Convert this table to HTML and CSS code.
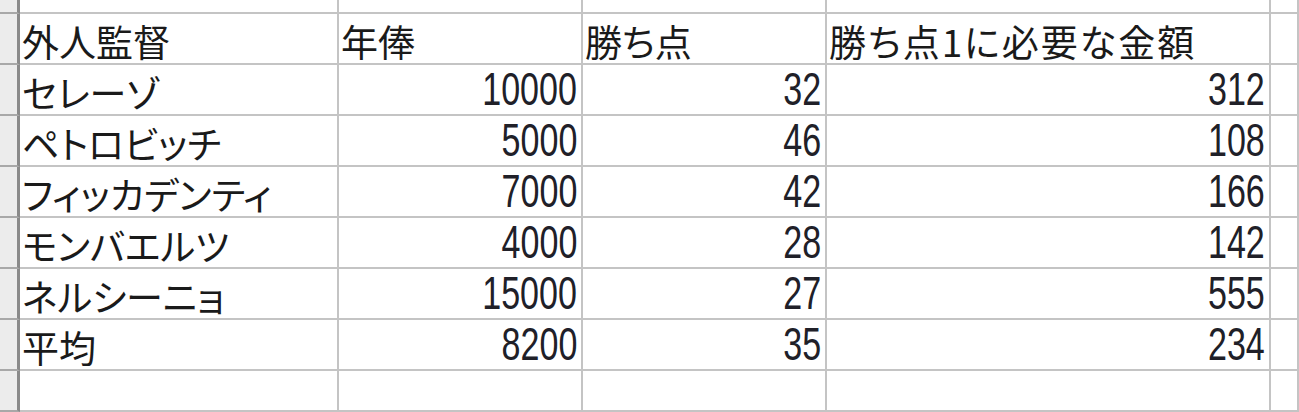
FILE: index.html
```html
<!DOCTYPE html>
<html lang="ja">
<head>
<meta charset="utf-8">
<link rel="stylesheet" href="styles.css">
</head>
<body>
<div class="sheet">
  <div class="rh"></div><div class="c"></div><div class="c"></div><div class="c"></div><div class="c"></div><div class="c"></div>

  <div class="rh"></div><div class="c t">外人監督</div><div class="c t">年俸</div><div class="c t">勝ち点</div><div class="c t wide">勝ち点1に必要な金額</div><div class="c"></div>

  <div class="rh"></div><div class="c t">セレーゾ</div><div class="c n"><span>10000</span></div><div class="c n"><span>32</span></div><div class="c n"><span>312</span></div><div class="c"></div>

  <div class="rh"></div><div class="c t">ペトロビッチ</div><div class="c n"><span>5000</span></div><div class="c n"><span>46</span></div><div class="c n"><span>108</span></div><div class="c"></div>

  <div class="rh"></div><div class="c t">フィッカデンティ</div><div class="c n"><span>7000</span></div><div class="c n"><span>42</span></div><div class="c n"><span>166</span></div><div class="c"></div>

  <div class="rh"></div><div class="c t">モンバエルツ</div><div class="c n"><span>4000</span></div><div class="c n"><span>28</span></div><div class="c n"><span>142</span></div><div class="c"></div>

  <div class="rh"></div><div class="c t">ネルシーニョ</div><div class="c n"><span>15000</span></div><div class="c n"><span>27</span></div><div class="c n"><span>555</span></div><div class="c"></div>

  <div class="rh"></div><div class="c t">平均</div><div class="c n"><span>8200</span></div><div class="c n"><span>35</span></div><div class="c n"><span>234</span></div><div class="c"></div>

  <div class="rh"></div><div class="c"></div><div class="c"></div><div class="c"></div><div class="c"></div><div class="c"></div>
</div>
</body>
</html>
```

FILE: styles.css
```css
html, body {
  margin: 0;
  padding: 0;
  background: #ffffff;
  overflow: hidden;
}

.sheet {
  width: 1299px;
  height: 412px;
  display: grid;
  grid-template-columns: 20px 319px 244px 244px 444px 1fr;
  grid-template-rows: 14px repeat(7, 51px) 1fr;
  color: #1a1a1a;
}

.rh {
  box-sizing: border-box;
  background: #ececec;
  border-right: 3px solid #8a8a8a;
  border-bottom: 2px solid #a8a8a8;
}

.c {
  box-sizing: border-box;
  min-width: 0;
  border-right: 2px solid #c4c4c4;
  border-bottom: 2px solid #c4c4c4;
  display: flex;
  align-items: flex-end;
  white-space: nowrap;
}

.t {
  font-family: "Noto Sans CJK JP", "Liberation Sans", sans-serif;
  font-feature-settings: "palt";
  font-size: 37px;
  line-height: 44px;
  padding-left: 2px;
  padding-bottom: 0;
}

.wide {
  letter-spacing: 2px;
}

.n {
  justify-content: flex-end;
  padding-right: 4px;
  padding-bottom: 0;
}

.n span {
  font-family: "Liberation Sans", Arial, sans-serif;
  font-size: 46px;
  line-height: 50px;
  display: inline-block;
  transform: scaleX(0.74);
  transform-origin: right bottom;
  color: #202028;
}
```
